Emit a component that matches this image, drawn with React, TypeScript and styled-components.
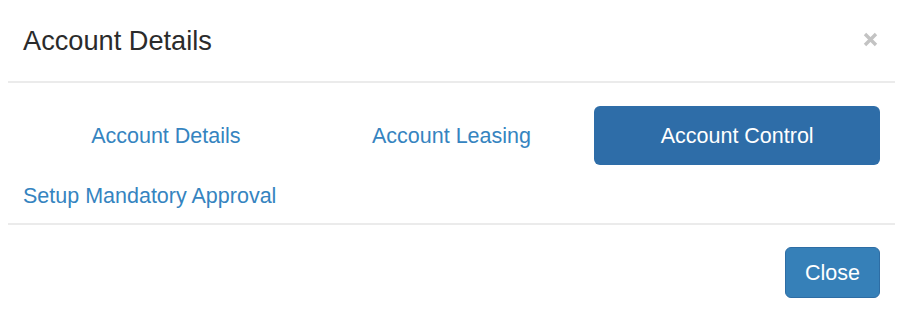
import React from "react";
import styled, { createGlobalStyle } from "styled-components";

const GlobalStyle = createGlobalStyle`
  html, body {
    margin: 0;
    padding: 0;
    background: #ffffff;
  }
  body {
    font-family: "Liberation Sans", Arial, Helvetica, sans-serif;
    -webkit-font-smoothing: antialiased;
  }
  * { box-sizing: border-box; }
`;

const Modal = styled.div`
  width: 900px;
  height: 317px;
  background: #ffffff;
  display: flex;
  flex-direction: column;
`;

const Header = styled.div`
  height: 81px;
  display: flex;
  align-items: center;
  justify-content: space-between;
  padding: 0 22px 0 23px;
`;

const Title = styled.h4`
  margin: 0;
  font-size: 27.2px;
  line-height: 38px;
  font-weight: 400;
  color: #2b2b2b;
`;

const CloseX = styled.button`
  border: 0;
  background: transparent;
  padding: 0;
  width: 15px;
  height: 15px;
  display: flex;
  align-items: center;
  justify-content: center;
  cursor: pointer;
  color: #c3c3c3;
  margin-top: -2px;
`;

const Divider = styled.div`
  height: 2px;
  background: #ebebeb;
  margin: 0 5px 0 8px;
`;

const Body = styled.div`
  padding: 23px 20px 12px 23px;
`;

const PillNav = styled.nav`
  display: grid;
  grid-template-columns: repeat(3, 1fr);
  height: 59px;
`;

const Pill = styled.a<{ $active?: boolean }>`
  display: flex;
  align-items: center;
  justify-content: center;
  border-radius: 6px;
  font-size: 21.5px;
  line-height: 30px;
  text-decoration: none;
  cursor: pointer;
  color: ${(p) => (p.$active ? "#ffffff" : "#3584c0")};
  background: ${(p) => (p.$active ? "#2e6da8" : "transparent")};
`;

const SubLink = styled.a`
  display: block;
  margin-top: 16px;
  font-size: 21.5px;
  line-height: 30px;
  color: #3584c0;
  text-decoration: none;
  cursor: pointer;
`;

const Footer = styled.div`
  display: flex;
  justify-content: flex-end;
  padding: 22px 20px 0 23px;
`;

const PrimaryButton = styled.button`
  height: 51px;
  padding: 0 19px;
  font-family: inherit;
  font-size: 21.5px;
  line-height: 30px;
  color: #ffffff;
  background: #3680b8;
  border: 1.5px solid #2e6da4;
  border-radius: 6px;
  cursor: pointer;
`;

const tabs = [
  { label: "Account Details", active: false },
  { label: "Account Leasing", active: false },
  { label: "Account Control", active: true },
];

export default function App() {
  return (
    <>
      <GlobalStyle />
      <Modal>
        <Header>
          <Title>Account Details</Title>
          <CloseX aria-label="Close">
            <svg width="15" height="15" viewBox="0 0 15 15">
              <path
                d="M2 2 L13 13 M13 2 L2 13"
                stroke="currentColor"
                strokeWidth="3.4"
                strokeLinecap="butt"
              />
            </svg>
          </CloseX>
        </Header>
        <Divider />
        <Body>
          <PillNav>
            {tabs.map((t) => (
              <Pill key={t.label} $active={t.active}>
                {t.label}
              </Pill>
            ))}
          </PillNav>
          <SubLink>Setup Mandatory Approval</SubLink>
        </Body>
        <Divider />
        <Footer>
          <PrimaryButton>Close</PrimaryButton>
        </Footer>
      </Modal>
    </>
  );
}
